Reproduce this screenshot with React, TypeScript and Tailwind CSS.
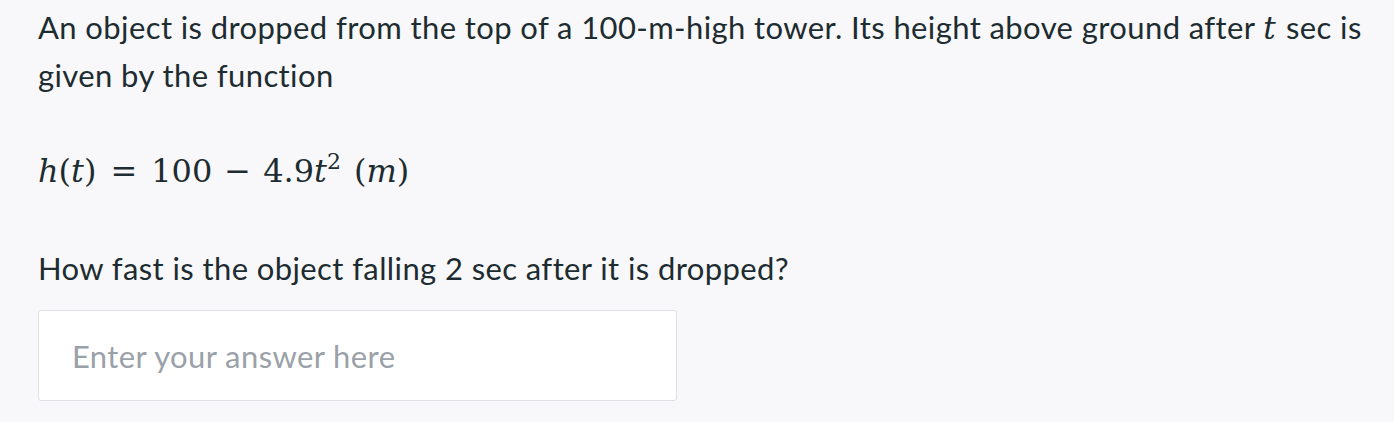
export default function App() {
  return (
    <div className="min-h-[422px] w-full bg-[#f8f8fa] pl-[38px] pt-[4px] text-[#1d2c30] font-['Lato','Liberation_Sans',sans-serif] tracking-[0.4px]">
      <p className="w-[1335px] text-[31px] leading-[47px]">
        An object is dropped from the top of a 100-m-high tower. Its height above ground after{" "}
        <span className="mr-[2px] font-['DejaVu_Serif',serif] italic text-[31px] tracking-normal">t</span> sec is given by the function
      </p>

      <div className="mt-[48px] flex items-baseline font-['DejaVu_Serif',serif] text-[32px] leading-[48px] tracking-normal whitespace-pre">
        <span className="italic">h</span>
        <span>(</span>
        <span className="italic">t</span>
        <span>)</span>
        <span className="mx-[14px]">=</span>
        <span>100</span>
        <span className="mx-[12px]">−</span>
        <span>4.9</span>
        <span className="italic">t</span>
        <span className="relative -top-[13px] text-[22px] leading-none">2</span>
        <span className="ml-[13px]">(</span>
        <span className="italic">m</span>
        <span>)</span>
      </div>

      <p className="mt-[50px] text-[31px] leading-[47px]">
        How fast is the object falling 2 sec after it is dropped?
      </p>

      <div className="mt-[18px] w-[639px]">
        <input
          type="text"
          placeholder="Enter your answer here"
          className="h-[91px] w-full rounded-[3px] border border-[#dde1e6] bg-white px-[33px] text-[31px] tracking-[0.4px] text-[#1d2c30] placeholder:text-[#9ba1a8] outline-none"
        />
      </div>
    </div>
  );
}
